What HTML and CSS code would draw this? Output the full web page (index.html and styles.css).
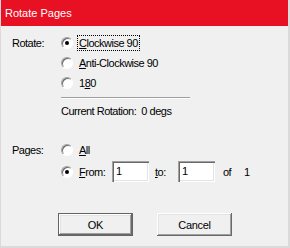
FILE: index.html
```html
<!DOCTYPE html>
<html lang="en">
<head>
    <meta charset="UTF-8">
    <link rel="stylesheet" href="styles.css">
    <title>Rotate Pages</title>
</head>
<body>
    <div class="window">
        <div class="titlebar">Rotate Pages</div>

        <div class="group rotate">
            <div class="group-label">Rotate:</div>
            <div class="options">
                <label class="option"><span class="radio checked"></span><span class="focus"><u>C</u>lockwise 90</span></label>
                <label class="option"><span class="radio"></span><span><u>A</u>nti-Clockwise 90</span></label>
                <label class="option"><span class="radio"></span><span>1<u>8</u>0</span></label>
                <div class="separator"></div>
                <div class="info">Current Rotation:&nbsp; 0 degs</div>
            </div>
        </div>

        <div class="group pages">
            <div class="group-label">Pages:</div>
            <div class="options">
                <label class="option"><span class="radio"></span><span><u>A</u>ll</span></label>
                <div class="option range">
                    <span class="radio checked"></span>
                    <span><u>F</u>rom:</span>
                    <span class="edit">1</span>
                    <span class="to"><u>t</u>o:</span>
                    <span class="edit">1</span>
                    <span class="of">of</span>
                    <span>1</span>
                </div>
            </div>
        </div>

        <div class="buttons">
            <button type="button" class="btn default">OK</button>
            <button type="button" class="btn">Cancel</button>
        </div>
    </div>
</body>
</html>
```

FILE: styles.css
```css
body {
    margin: 0;
    padding: 0;
    background-color: #ffffff;
    font-family: "Liberation Sans", Arial, sans-serif;
    font-size: 11px;
    color: #000000;
}

.window {
    width: 290px;
    height: 248px;
    box-sizing: border-box;
    background-color: #f0f0f0;
    border-left: 1px solid #dadada;
    border-right: 2px solid #dadada;
    border-bottom: 2px solid #dadada;
}

.titlebar {
    height: 26px;
    line-height: 26px;
    padding-left: 4px;
    background-color: #e81123;
    color: #ffffff;
    font-size: 11px;
}

.group {
    display: grid;
    grid-template-columns: 49px 1fr;
    padding-left: 11px;
    letter-spacing: -0.5px;
}

.rotate {
    margin-top: 7px;
}

.pages {
    margin-top: 19px;
}

.group-label {
    height: 20px;
    line-height: 20px;
}

.option {
    display: flex;
    align-items: center;
    height: 20px;
}

.radio {
    width: 12px;
    height: 12px;
    box-sizing: border-box;
    border-radius: 50%;
    margin-right: 6px;
    background-color: #ffffff;
    border: 1px solid;
    border-color: #a0a0a0 #ffffff #ffffff #a0a0a0;
    box-shadow: inset 1px 1px 0 #696969;
    display: flex;
    align-items: center;
    justify-content: center;
    flex-shrink: 0;
}

.radio.checked::after {
    content: "";
    width: 4px;
    height: 4px;
    border-radius: 50%;
    background-color: #000000;
}

.focus {
    outline: 1px dotted #000000;
    outline-offset: 0;
    padding: 0 1px;
    margin-left: -1px;
    line-height: 14px;
}

.separator {
    width: 129px;
    height: 1px;
    background-color: #a0a0a0;
    border-bottom: 1px solid #ffffff;
    margin-top: 4px;
}

.info {
    height: 20px;
    line-height: 20px;
    margin-top: 2px;
}

.range {
    height: 21px;
    margin-top: 1px;
    display: grid;
    grid-template-columns: 18px 33px 37px 29px 37px 29px auto;
    align-items: center;
}

.range .radio {
    margin-right: 0;
}

.edit {
    height: 21px;
    line-height: 21px;
    box-sizing: border-box;
    padding-left: 4px;
    background-color: #ffffff;
    box-shadow: inset 1px 1px 0 #a0a0a0, inset 2px 2px 0 #696969, inset -1px -1px 0 #ffffff, inset -2px -2px 0 #e3e3e3;
}

.to {
    padding-left: 6px;
}

.of {
    padding-left: 8px;
}

.buttons {
    display: flex;
    gap: 24px;
    padding-left: 57px;
    margin-top: 31px;
}

.btn {
    width: 75px;
    height: 23px;
    padding: 0;
    font-family: "Liberation Sans", Arial, sans-serif;
    font-size: 11px;
    letter-spacing: -0.3px;
    color: #000000;
    background-color: #f0f0f0;
    border: none;
    box-shadow: inset -1px -1px 0 #696969, inset 1px 1px 0 #ffffff, inset -2px -2px 0 #a0a0a0, inset 2px 2px 0 #e3e3e3;
}

.btn.default {
    border: 1px solid #646464;
}
```
